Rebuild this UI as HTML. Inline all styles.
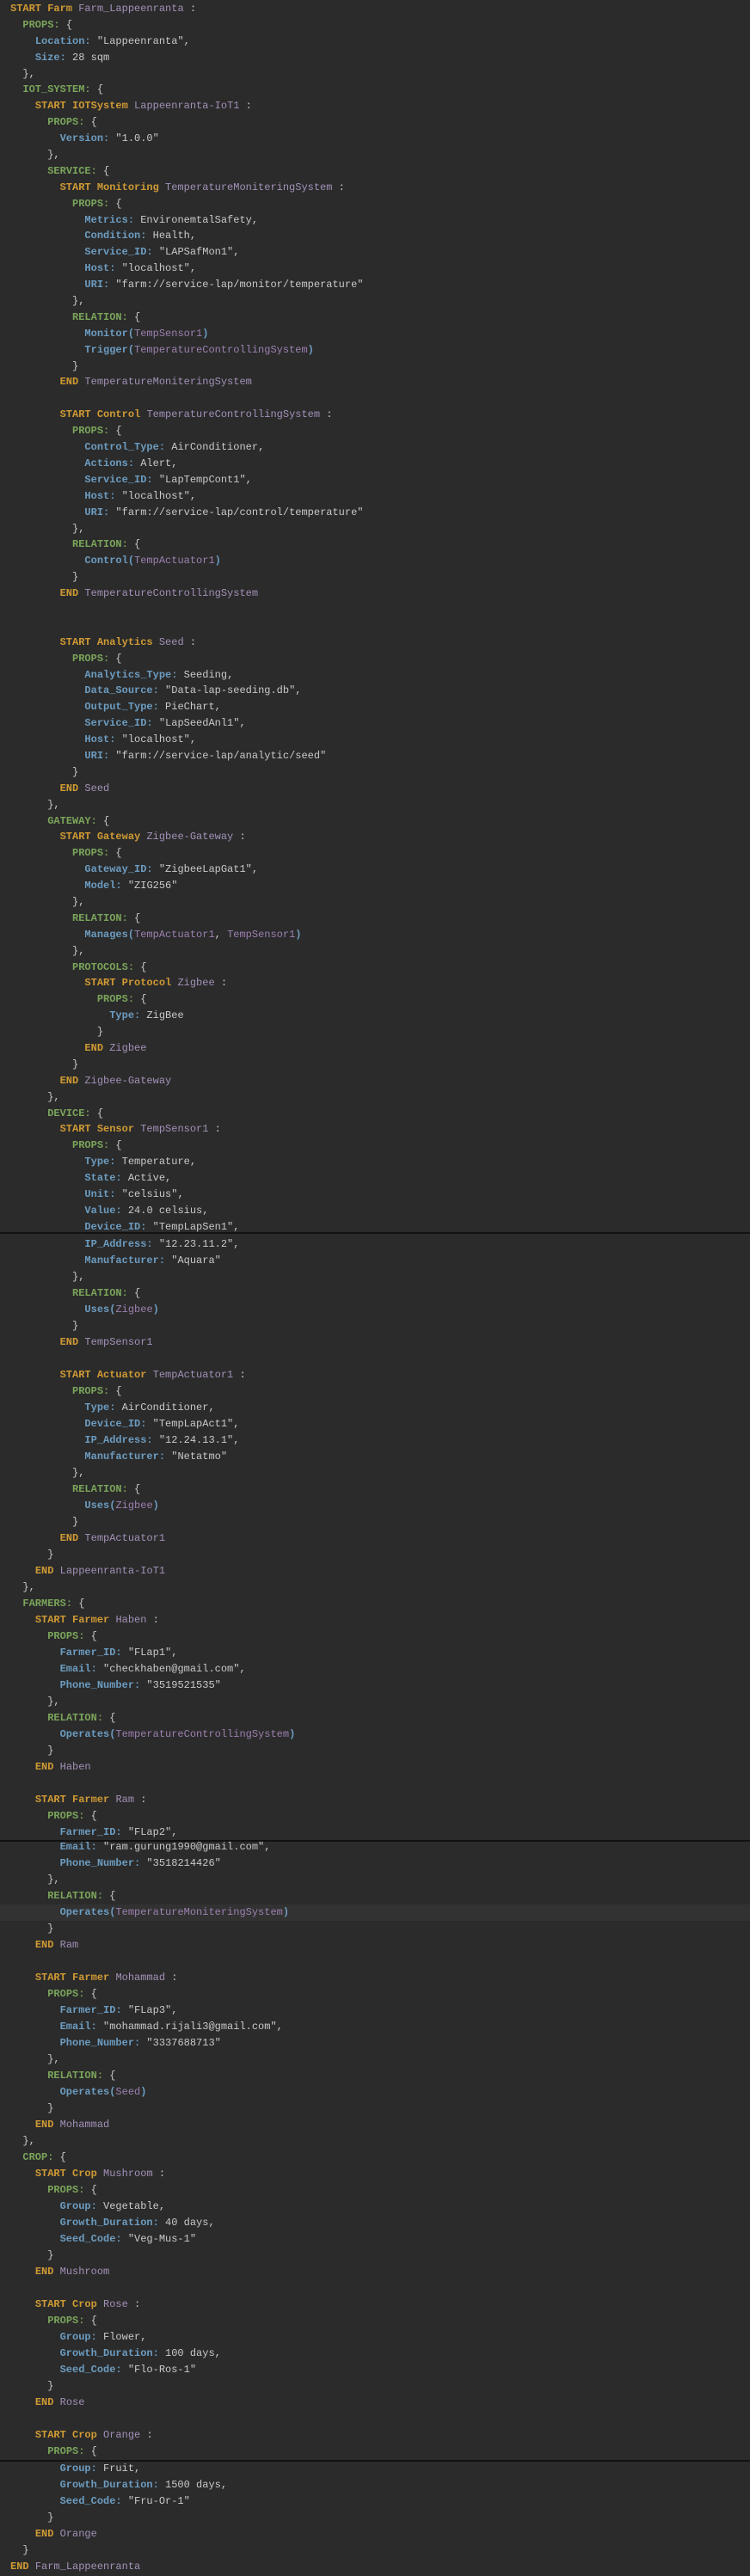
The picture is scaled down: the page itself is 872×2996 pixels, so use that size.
<!DOCTYPE html>
<html><head><meta charset="utf-8"><style>
html,body{margin:0;padding:0;background:#2b2b2b;}
body{width:872px;height:2996px;position:relative;overflow:hidden;font-family:"Liberation Mono","DejaVu Sans Mono",monospace;font-size:12px;color:#c9c9c9;}
.s{position:absolute;left:0;width:872px;}
.s div{white-space:pre;padding-left:12px;height:19px;line-height:19px;}
.s1 div{height:18.9px;line-height:18.9px;}
.k{color:#cf9a34;font-weight:bold}
.n{color:#a391b8}
.g{color:#7aa45a;font-weight:bold}
.p{color:#6c9cc0;font-weight:bold}
.f{color:#6c9cc0;font-weight:bold}
.a{color:#9c80b0}
.b{color:#b8b8b8}
.sep{position:absolute;left:0;width:872px;height:2px;background:#121212;}
.hl{background:#323232;}
</style></head><body>
<div class="s s1" style="top:1px">
<div><span class="k">START Farm</span> <span class="n">Farm_Lappeenranta</span> :</div>
<div>  <span class="g">PROPS:</span> {</div>
<div>    <span class="p">Location:</span> "Lappeenranta",</div>
<div>    <span class="p">Size:</span> 28 sqm</div>
<div>  },</div>
<div>  <span class="g">IOT_SYSTEM:</span> {</div>
<div>    <span class="k">START IOTSystem</span> <span class="n">Lappeenranta-IoT1</span> :</div>
<div>      <span class="g">PROPS:</span> {</div>
<div>        <span class="p">Version:</span> "1.0.0"</div>
<div>      },</div>
<div>      <span class="g">SERVICE:</span> {</div>
<div>        <span class="k">START Monitoring</span> <span class="n">TemperatureMoniteringSystem</span> :</div>
<div>          <span class="g">PROPS:</span> {</div>
<div>            <span class="p">Metrics:</span> EnvironemtalSafety,</div>
<div>            <span class="p">Condition:</span> Health,</div>
<div>            <span class="p">Service_ID:</span> "LAPSafMon1",</div>
<div>            <span class="p">Host:</span> "localhost",</div>
<div>            <span class="p">URI:</span> "farm://service-lap/monitor/temperature"</div>
<div>          },</div>
<div>          <span class="g">RELATION:</span> {</div>
<div>            <span class="f">Monitor(</span><span class="a">TempSensor1</span><span class="f">)</span></div>
<div>            <span class="f">Trigger(</span><span class="a">TemperatureControllingSystem</span><span class="f">)</span></div>
<div>          }</div>
<div>        <span class="k">END</span> <span class="n">TemperatureMoniteringSystem</span></div>
<div> </div>
<div>        <span class="k">START Control</span> <span class="n">TemperatureControllingSystem</span> :</div>
<div>          <span class="g">PROPS:</span> {</div>
<div>            <span class="p">Control_Type:</span> AirConditioner,</div>
<div>            <span class="p">Actions:</span> Alert,</div>
<div>            <span class="p">Service_ID:</span> "LapTempCont1",</div>
<div>            <span class="p">Host:</span> "localhost",</div>
<div>            <span class="p">URI:</span> "farm://service-lap/control/temperature"</div>
<div>          },</div>
<div>          <span class="g">RELATION:</span> {</div>
<div>            <span class="f">Control(</span><span class="a">TempActuator1</span><span class="f">)</span></div>
<div>          }</div>
<div>        <span class="k">END</span> <span class="n">TemperatureControllingSystem</span></div>
<div> </div>
<div> </div>
<div>        <span class="k">START Analytics</span> <span class="n">Seed</span> :</div>
<div>          <span class="g">PROPS:</span> {</div>
<div>            <span class="p">Analytics_Type:</span> Seeding,</div>
<div>            <span class="p">Data_Source:</span> "Data-lap-seeding.db",</div>
<div>            <span class="p">Output_Type:</span> PieChart,</div>
<div>            <span class="p">Service_ID:</span> "LapSeedAnl1",</div>
<div>            <span class="p">Host:</span> "localhost",</div>
<div>            <span class="p">URI:</span> "farm://service-lap/analytic/seed"</div>
<div>          }</div>
<div>        <span class="k">END</span> <span class="n">Seed</span></div>
<div>      },</div>
<div>      <span class="g">GATEWAY:</span> {</div>
<div>        <span class="k">START Gateway</span> <span class="n">Zigbee-Gateway</span> :</div>
<div>          <span class="g">PROPS:</span> {</div>
<div>            <span class="p">Gateway_ID:</span> "ZigbeeLapGat1",</div>
<div>            <span class="p">Model:</span> "ZIG256"</div>
<div>          },</div>
<div>          <span class="g">RELATION:</span> {</div>
<div>            <span class="f">Manages(</span><span class="a">TempActuator1</span>, <span class="a">TempSensor1</span><span class="f">)</span></div>
<div>          },</div>
<div>          <span class="g">PROTOCOLS:</span> {</div>
<div>            <span class="k">START Protocol</span> <span class="n">Zigbee</span> :</div>
<div>              <span class="g">PROPS:</span> {</div>
<div>                <span class="p">Type:</span> ZigBee</div>
<div>              }</div>
<div>            <span class="k">END</span> <span class="n">Zigbee</span></div>
<div>          }</div>
<div>        <span class="k">END</span> <span class="n">Zigbee-Gateway</span></div>
<div>      },</div>
<div>      <span class="g">DEVICE:</span> {</div>
<div>        <span class="k">START Sensor</span> <span class="n">TempSensor1</span> :</div>
<div>          <span class="g">PROPS:</span> {</div>
<div>            <span class="p">Type:</span> Temperature,</div>
<div>            <span class="p">State:</span> Active,</div>
<div>            <span class="p">Unit:</span> "celsius",</div>
<div>            <span class="p">Value:</span> 24.0 celsius,</div>
<div>            <span class="p">Device_ID:</span> "TempLapSen1",</div>
</div>
<div class="sep" style="top:1433px"></div>
<div class="s" style="top:1437.5px">
<div>            <span class="p">IP_Address:</span> "12.23.11.2",</div>
<div>            <span class="p">Manufacturer:</span> "Aquara"</div>
<div>          },</div>
<div>          <span class="g">RELATION:</span> {</div>
<div>            <span class="f">Uses(</span><span class="a">Zigbee</span><span class="f">)</span></div>
<div>          }</div>
<div>        <span class="k">END</span> <span class="n">TempSensor1</span></div>
<div> </div>
<div>        <span class="k">START Actuator</span> <span class="n">TempActuator1</span> :</div>
<div>          <span class="g">PROPS:</span> {</div>
<div>            <span class="p">Type:</span> AirConditioner,</div>
<div>            <span class="p">Device_ID:</span> "TempLapAct1",</div>
<div>            <span class="p">IP_Address:</span> "12.24.13.1",</div>
<div>            <span class="p">Manufacturer:</span> "Netatmo"</div>
<div>          },</div>
<div>          <span class="g">RELATION:</span> {</div>
<div>            <span class="f">Uses(</span><span class="a">Zigbee</span><span class="f">)</span></div>
<div>          }</div>
<div>        <span class="k">END</span> <span class="n">TempActuator1</span></div>
<div>      }</div>
<div>    <span class="k">END</span> <span class="n">Lappeenranta-IoT1</span></div>
<div>  },</div>
<div>  <span class="g">FARMERS:</span> {</div>
<div>    <span class="k">START Farmer</span> <span class="n">Haben</span> :</div>
<div>      <span class="g">PROPS:</span> {</div>
<div>        <span class="p">Farmer_ID:</span> "FLap1",</div>
<div>        <span class="p">Email:</span> "checkhaben@gmail.com",</div>
<div>        <span class="p">Phone_Number:</span> "3519521535"</div>
<div>      },</div>
<div>      <span class="g">RELATION:</span> {</div>
<div>        <span class="f">Operates(</span><span class="a">TemperatureControllingSystem</span><span class="f">)</span></div>
<div>      }</div>
<div>    <span class="k">END</span> <span class="n">Haben</span></div>
<div> </div>
<div>    <span class="k">START Farmer</span> <span class="n">Ram</span> :</div>
<div>      <span class="g">PROPS:</span> {</div>
<div>        <span class="p">Farmer_ID:</span> "FLap2",</div>
</div>
<div class="s" style="top:2138.5px">
<div>        <span class="p">Email:</span> "ram.gurung1990@gmail.com",</div>
<div>        <span class="p">Phone_Number:</span> "3518214426"</div>
<div>      },</div>
<div>      <span class="g">RELATION:</span> {</div>
<div class="hl">        <span class="f">Operates(</span><span class="a">TemperatureMoniteringSystem</span><span class="f">)</span></div>
<div>      }</div>
<div>    <span class="k">END</span> <span class="n">Ram</span></div>
<div> </div>
<div>    <span class="k">START Farmer</span> <span class="n">Mohammad</span> :</div>
<div>      <span class="g">PROPS:</span> {</div>
<div>        <span class="p">Farmer_ID:</span> "FLap3",</div>
<div>        <span class="p">Email:</span> "mohammad.rijali3@gmail.com",</div>
<div>        <span class="p">Phone_Number:</span> "3337688713"</div>
<div>      },</div>
<div>      <span class="g">RELATION:</span> {</div>
<div>        <span class="f">Operates(</span><span class="a">Seed</span><span class="f">)</span></div>
<div>      }</div>
<div>    <span class="k">END</span> <span class="n">Mohammad</span></div>
<div>  },</div>
<div>  <span class="g">CROP:</span> {</div>
<div>    <span class="k">START Crop</span> <span class="n">Mushroom</span> :</div>
<div>      <span class="g">PROPS:</span> {</div>
<div>        <span class="p">Group:</span> Vegetable,</div>
<div>        <span class="p">Growth_Duration:</span> 40 days,</div>
<div>        <span class="p">Seed_Code:</span> "Veg-Mus-1"</div>
<div>      }</div>
<div>    <span class="k">END</span> <span class="n">Mushroom</span></div>
<div> </div>
<div>    <span class="k">START Crop</span> <span class="n">Rose</span> :</div>
<div>      <span class="g">PROPS:</span> {</div>
<div>        <span class="p">Group:</span> Flower,</div>
<div>        <span class="p">Growth_Duration:</span> 100 days,</div>
<div>        <span class="p">Seed_Code:</span> "Flo-Ros-1"</div>
<div>      }</div>
<div>    <span class="k">END</span> <span class="n">Rose</span></div>
<div> </div>
<div>    <span class="k">START Crop</span> <span class="n">Orange</span> :</div>
<div>      <span class="g">PROPS:</span> {</div>
</div>
<div class="sep" style="top:2140px"></div>
<div class="sep" style="top:2861px"></div>
<div class="s" style="top:2861.5px">
<div>        <span class="p">Group:</span> Fruit,</div>
<div>        <span class="p">Growth_Duration:</span> 1500 days,</div>
<div>        <span class="p">Seed_Code:</span> "Fru-Or-1"</div>
<div>      }</div>
<div>    <span class="k">END</span> <span class="n">Orange</span></div>
<div>  }</div>
<div><span class="k">END</span> <span class="n">Farm_Lappeenranta</span></div>
</div>
</body></html>
